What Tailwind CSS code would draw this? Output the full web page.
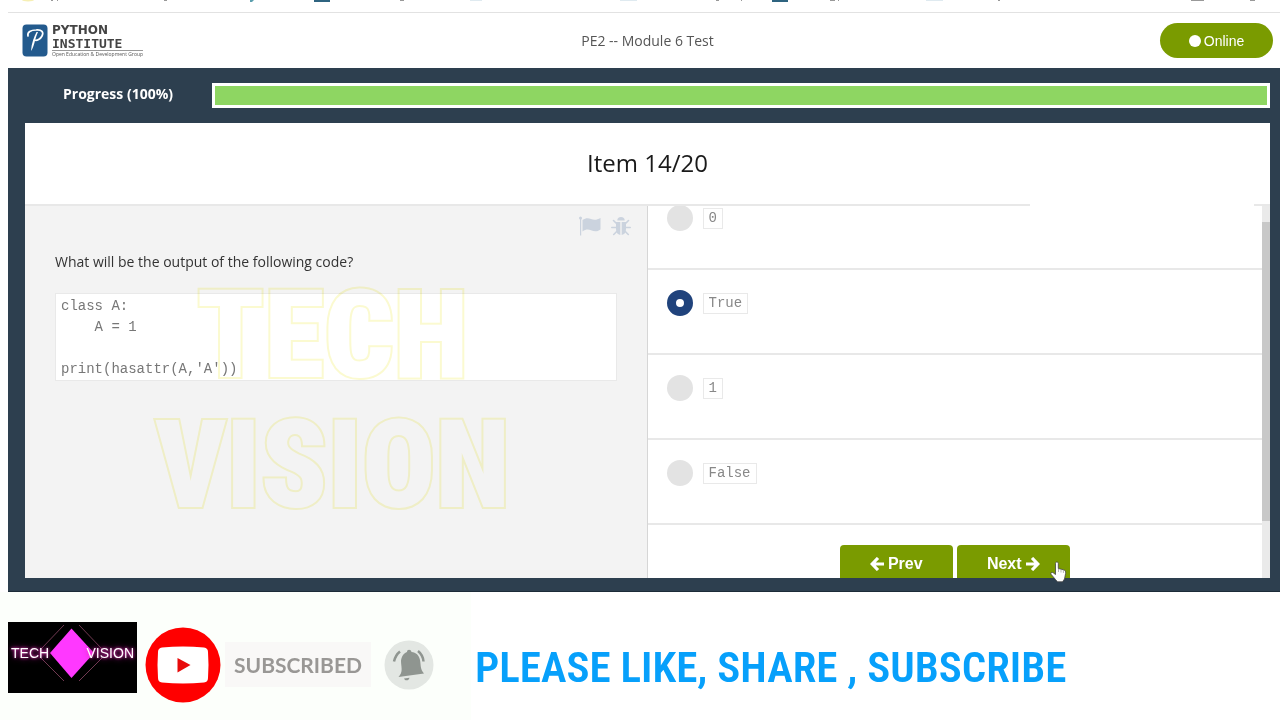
<!DOCTYPE html>
<html lang="en">
<head>
<meta charset="utf-8">
<meta name="viewport" content="width=device-width, initial-scale=1">
<title>PE2 -- Module 6 Test</title>
<script src="https://cdn.jsdelivr.net/npm/@tailwindcss/browser@4"></script>
</head>
<body class="flex h-screen flex-col overflow-hidden bg-white font-['Open_Sans',sans-serif] text-[#333]">

<!-- lower edge of the browser's bookmarks bar -->
<div class="ml-2 h-[13px] shrink-0 border-b border-[#e2e2e2]" aria-hidden="true">
  <svg class="block h-3 w-[1272px]" viewBox="8 0 1272 12">
    <ellipse cx="28" cy="0" rx="6" ry="1.5" fill="#f6efb4"/>
    <path fill="#2f6480" d="M314 0h16v2h-16zM772 0h16v2h-16z"/>
    <path fill="#dfeaf0" d="M620 0h17v1h-17zM926 0h17v1h-17zM470 0h12v1h-12z"/>
    <path fill="#999" d="M51 0h2v1h-2zM57 0h1v1h-1zM164 0h3v1h-3zM400 0h4v1h-4zM716 0h3v1h-3zM741 0h1v1h-1zM830 0h5v1h-5zM838 0h1v1h-1zM998 0h2v1h-2zM1191 0h13v1h-13zM1250 0h5v1h-5z"/>
    <path fill="#5c9fae" d="M250 0h4l-2 2h-2z"/>
  </svg>
</div>

<header class="flex h-[55px] shrink-0 items-center pr-[7px] pl-[22px]">
  <a href="#" class="flex flex-1 items-center gap-1" aria-label="Python Institute">
    <svg class="h-[33px] w-[26px]" viewBox="0 0 26 33">
      <rect x="0.5" y="0.5" width="25" height="32" rx="4" fill="#235a8d"/>
      <path d="M6 12C5 8 9 6 14 6C20 5.500 22 8 20 12C18.500 15 15 17 12.500 16" fill="none" stroke="#fff" stroke-width="1.700" stroke-linecap="round"/>
      <path d="M14.500 8C12 13 9.500 19 9 27C12 24 13 14 16 8Z" fill="#fff"/>
    </svg>
    <span class="flex flex-col text-[#444]">
      <span class="font-['DejaVu_Sans',sans-serif] text-xs leading-[13px] font-bold">PYTHON</span>
      <span class="font-['DejaVu_Sans_Mono',monospace] text-[13px] leading-[13px] font-bold">INSTITUTE</span>
      <span class="border-t border-[#999] text-[5px] leading-[7px] text-[#555]">Open Education &amp; Development Group</span>
    </span>
  </a>
  <h1 class="text-sm text-[#555]">PE2 -- Module 6 Test</h1>
  <div class="flex flex-1 justify-end">
    <button type="button" class="flex h-[35px] w-[113px] items-center justify-center gap-[3px] rounded-full bg-[#7a9b00] font-['Liberation_Sans',sans-serif] text-sm text-white">
      <span class="size-3 rounded-full bg-white"></span>Online
    </button>
  </div>
</header>

<main class="ml-2 flex min-h-0 flex-1 flex-col border-b border-[#1c2b38] bg-[#2d3f4f] pr-[10px] pb-[13px] pl-[17px]">
  <div class="flex h-[55px] shrink-0 items-center">
    <span class="w-[187px] pb-1 pl-[38px] text-sm font-bold text-white">Progress (100%)</span>
    <div class="h-[25px] flex-1 border-[3px] border-white bg-[#8ed662]" role="progressbar" aria-valuenow="100" aria-label="Progress"></div>
  </div>

  <section class="flex min-h-0 flex-1 flex-col overflow-hidden bg-white">
    <div class="relative flex h-[83px] shrink-0 items-center justify-center border-b-2 border-[#e8e8e8] pb-[2px]">
      <h2 class="text-2xl text-[#1a1a1a]">Item 14/20</h2>
      <span class="absolute right-4 -bottom-[2px] h-[2px] w-56 bg-white"></span>
    </div>

    <div class="grid min-h-0 flex-1 grid-cols-2">
      <article class="relative border-r border-[#d6d6d6] bg-[#f3f3f3] px-[30px]">
        <div class="-mr-[14px] flex justify-end gap-[10px] pt-[10px] text-[#cbd3de]">
          <button type="button" aria-label="Flag item">
            <svg class="h-5 w-[22px]" viewBox="0 0 22 20" fill="currentColor"><circle cx="1.500" cy="2" r="1.500"/><path d="M1 2h1.200v17.500H1zM3.500 4C7 1.500 9.500 2 12 3C15 4.300 18 4 21.500 2V13.500C18 16 15 15.500 12 14.300C9 13 6.500 13.500 3.500 15.500Z"/></svg>
          </button>
          <button type="button" aria-label="Report a bug">
            <svg class="size-5" viewBox="0 0 20 20" fill="currentColor"><path d="M6.300 4.500a3.700 3.500 0 0 1 7.400 0z"/><path d="M5 6h4.300v13C6.500 18.500 5 16.500 5 13zM10.700 6H15v7c0 3.500-1.500 5.500-4.300 6z"/><path d="M5.500 7.500L2.500 4.500M14.500 7.500L17.500 4.500M5 11.500H.8M15 11.500h4.200M5.700 15.500L2.700 18.500M14.300 15.500L17.300 18.500" stroke="currentColor" stroke-width="1.600" stroke-linecap="round"/></svg>
          </button>
        </div>
        <p class="mt-4 text-sm leading-5">What will be the output of the following code?</p>
        <pre class="mt-[21px] border border-[#e9e9e9] bg-white px-[5px] pt-[2px] font-['Liberation_Mono',monospace] text-sm leading-[21px] text-[#777]">class A:
    A = 1

print(hasattr(A,'A'))</pre>
        <!-- channel watermark over the question: the white fill vanishes when multiplied, leaving the outline -->
        <div class="pointer-events-none absolute top-[65px] left-[130px] text-center font-['Roboto_Condensed','Roboto',sans-serif] text-[122px] leading-[130px] font-black text-white mix-blend-multiply [paint-order:stroke_fill] [-webkit-text-stroke:4px_#fbfad0]" aria-hidden="true">TECH<br>VISION</div>
      </article>

      <div class="flex min-h-0 overflow-hidden">
        <form class="min-w-0 flex-1">
          <fieldset class="-mt-[21px] font-['Liberation_Mono',monospace] text-sm text-[#888]">
            <label class="flex h-[85px] items-start gap-[10px] border-b-2 border-[#e8e8e8] pt-5 pl-[19px]">
              <input type="radio" name="answer" class="size-[26px] appearance-none rounded-full bg-[#e3e3e3] checked:border-[9px] checked:border-[#20437c] checked:bg-white">
              <span class="mt-[3px] border border-[#e9e9e9] px-[5px] leading-[19px]">0</span>
            </label>
            <label class="flex h-[85px] items-start gap-[10px] border-b-2 border-[#e8e8e8] pt-5 pl-[19px]">
              <input type="radio" name="answer" checked class="size-[26px] appearance-none rounded-full bg-[#e3e3e3] checked:border-[9px] checked:border-[#20437c] checked:bg-white">
              <span class="mt-[3px] border border-[#e9e9e9] px-[5px] leading-[19px]">True</span>
            </label>
            <label class="flex h-[85px] items-start gap-[10px] border-b-2 border-[#e8e8e8] pt-5 pl-[19px]">
              <input type="radio" name="answer" class="size-[26px] appearance-none rounded-full bg-[#e3e3e3] checked:border-[9px] checked:border-[#20437c] checked:bg-white">
              <span class="mt-[3px] border border-[#e9e9e9] px-[5px] leading-[19px]">1</span>
            </label>
            <label class="flex h-[85px] items-start gap-[10px] border-b-2 border-[#e8e8e8] pt-5 pl-[19px]">
              <input type="radio" name="answer" class="size-[26px] appearance-none rounded-full bg-[#e3e3e3] checked:border-[9px] checked:border-[#20437c] checked:bg-white">
              <span class="mt-[3px] border border-[#e9e9e9] px-[5px] leading-[19px]">False</span>
            </label>
          </fieldset>
          <div class="flex justify-center gap-1 pt-5 font-['Liberation_Sans',sans-serif] text-base font-bold text-white">
            <button type="button" class="flex h-[38px] w-[113px] items-center justify-center gap-1 rounded-sm bg-[#7a9b00]">
              <svg class="size-[14px]" viewBox="0 0 14 14" fill="none" stroke="#fff" stroke-width="3.200"><path d="M8 1L2.200 7l5.800 6M2.500 7H14"/></svg>Prev
            </button>
            <button type="button" class="flex h-[38px] w-[113px] items-center justify-center gap-1 rounded-sm bg-[#7a9b00]">
              Next<svg class="size-[14px]" viewBox="0 0 14 14" fill="none" stroke="#fff" stroke-width="3.200"><path d="M6 1L11.800 7l-5.800 6M11.500 7H0"/></svg>
            </button>
          </div>
        </form>
        <div class="w-2 bg-[#eaeaea] pt-4" aria-hidden="true"><div class="h-[299px] bg-[#c8c8c8]"></div></div>
      </div>
    </div>
  </section>
</main>

<!-- mouse pointer resting on the Next button -->
<svg class="pointer-events-none absolute top-[561px] left-[1050px] h-[22px] w-[17px]" viewBox="0 0 17 22" aria-hidden="true"><path d="M5.500 2.500C5.500 .5 8.200 .5 8.300 2.500V7.500L13.500 8.800C15.500 9.300 15.800 10.500 15.600 12.500L14.500 18L12.500 20.800H7.500L5.500 18.500L1 13.200C.3 11.800 2 10.800 3.200 11.800L5.500 13.500Z" fill="#fff" stroke="#444" stroke-width=".8"/><path d="M8.500 8v3M11 8.500v3M13.400 9v3" stroke="#999" stroke-width=".7"/></svg>

<footer class="flex h-32 shrink-0 items-center bg-white">
  <div class="flex h-full w-[471px] items-center bg-[#fcfffb] pt-[17px] pl-2">
    <div class="relative mb-[14px] h-[71px] w-[129px] bg-black">
      <svg class="absolute inset-0" viewBox="0 0 129 71" aria-hidden="true"><path d="M63.500 6.500L86 31L63.500 56L42 31Z" fill="#ff38ff"/><path d="M56 3L33 27M33 36L56 59M71 3L94 27M94 36L71 59" fill="none" stroke="#713a52" stroke-width="1"/></svg>
      <span class="absolute inset-x-[3px] top-[22px] flex justify-between font-['Liberation_Sans',sans-serif] text-sm leading-[18px] text-white [text-shadow:0_0_3px_#ff38c8,0_0_6px_#c020a0]"><span>TECH</span><span>VISION</span></span>
    </div>
    <svg class="ml-2 size-[76px]" viewBox="0 0 76 76" role="img" aria-label="YouTube"><circle cx="38" cy="38" r="37.500" fill="#f00"/><path d="M17 20.500Q38 18.500 59 20.500Q63 21 63 25Q64 38 63 51Q63 55 59 55.500Q38 57.500 17 55.500Q13 55 13 51Q12 38 13 25Q13 21 17 20.500Z" fill="#fff"/><path d="M32.500 31L45.500 38l-13 7.500z" fill="#e80a0a"/></svg>
    <button type="button" class="ml-1 h-[45px] w-[146px] bg-[#f9f8f7] text-center font-['Lato',sans-serif] text-[21px] font-bold text-[#999795]">SUBSCRIBED</button>
    <button type="button" class="ml-[13px]" aria-label="Notifications">
      <svg class="size-[50px]" viewBox="0 0 50 50"><circle cx="25" cy="25" r="24.500" fill="#e3e7e3"/><g fill="#8f9590"><path d="M16 35C19 31 17 26 17 21C17.500 16 20 13 23 12C23 9 27 9 27.500 12C32 12.500 35 15 36 20C37 25 36 29 40 33.500L14.500 37Z"/><path d="M20 38.500l5.500-.7c-.5 3-4.500 3.500-5.500.7z"/></g><path d="M10 21.500Q11.500 15 16 11.500M34 11Q39 15 39.500 21.500" fill="none" stroke="#8f9590" stroke-width="2.500"/></svg>
    </button>
  </div>
  <p class="pt-[22px] pl-1 font-['Roboto_Condensed','Roboto',sans-serif] text-[43px] leading-none font-semibold whitespace-nowrap text-[#07a0fb]">PLEASE LIKE, SHARE , SUBSCRIBE</p>
</footer>
</body>
</html>
